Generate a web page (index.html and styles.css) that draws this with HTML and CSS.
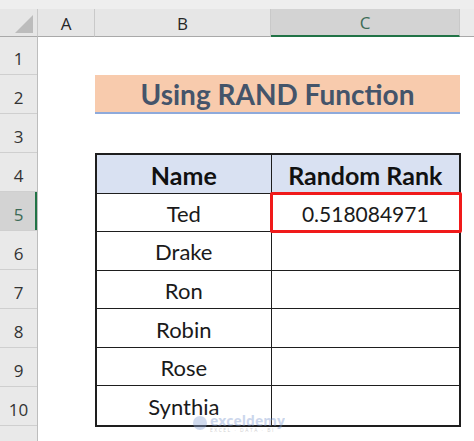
FILE: index.html
```html
<!DOCTYPE html>
<html>
<head>
<meta charset="utf-8">
<link rel="stylesheet" href="styles.css">
</head>
<body>
<div class="sheet">
  <div class="topstrip"></div>
  <div class="corner"><span class="tri"></span></div>
  <div class="ch ca">A</div>
  <div class="ch cb">B</div>
  <div class="ch cc sel">C</div>
  <div class="ch crest"></div>

  <div class="rowhdrs">
    <div class="rh r1">1</div>
    <div class="rh">2</div>
    <div class="rh">3</div>
    <div class="rh">4</div>
    <div class="rh sel">5</div>
    <div class="rh">6</div>
    <div class="rh">7</div>
    <div class="rh">8</div>
    <div class="rh">9</div>
    <div class="rh">10</div>
    <div class="rh last"></div>
  </div>

  <div class="title">Using RAND Function</div>

  <div class="tbl">
    <div class="th">Name</div>
    <div class="th">Random Rank</div>
    <div class="td">Ted</div>
    <div class="td active num">0.518084971</div>
    <div class="td">Drake</div>
    <div class="td"></div>
    <div class="td">Ron</div>
    <div class="td"></div>
    <div class="td">Robin</div>
    <div class="td"></div>
    <div class="td">Rose</div>
    <div class="td"></div>
    <div class="td">Synthia</div>
    <div class="td"></div>
  </div>

  <div class="watermark"><span class="wm-logo"></span><span class="wm-text">exceldemy<small>EXCEL · DATA · BI</small></span></div>
</div>
</body>
</html>
```
FILE: styles.css
```css
html, body {
  margin: 0;
  padding: 0;
  background: #ffffff;
}
.sheet {
  position: relative;
  width: 474px;
  height: 441px;
  overflow: hidden;
  display: grid;
  grid-template-columns: 38px 57px 176px 189px 14px;
  grid-template-rows: 9px 28px 38px 39px 39px 273px 15px;
  font-family: Lato, "Open Sans", sans-serif;
}
.topstrip {
  grid-column: 1 / -1;
  grid-row: 1;
  background: #eeeeee;
}
.corner, .ch {
  grid-row: 2;
  background: #e6e6e6;
  border-bottom: 1px solid #a9a9a9;
  border-right: 1px solid #c9c9c9;
  box-sizing: border-box;
}
.corner { grid-column: 1; position: relative; }
.ca { grid-column: 2; }
.cb { grid-column: 3; }
.cc { grid-column: 4; }
.crest { grid-column: 5; border-right: none; background: #ebebeb; }
.tri {
  position: absolute;
  right: 4px;
  bottom: 3px;
  width: 0;
  height: 0;
  border-left: 18px solid transparent;
  border-bottom: 18px solid #bcbcbc;
}
.ch {
  display: flex;
  align-items: center;
  justify-content: center;
  font-family: "Open Sans", sans-serif;
  font-size: 17px;
  color: #262626;
  padding-top: 1px;
}
.ch.sel {
  background: #d3d3d3;
  color: #3d6b57;
  border-bottom: 2px solid #217346;
}
.rowhdrs {
  grid-column: 1;
  grid-row: 3 / -1;
  background: #e9e9e9;
  border-right: 1px solid #bdbdbd;
  box-sizing: border-box;
}
.rh {
  height: 39px;
  box-sizing: border-box;
  border-bottom: 1px solid #cfcfcf;
  display: flex;
  align-items: center;
  justify-content: center;
  padding-top: 6px;
  font-family: "Open Sans", sans-serif;
  font-size: 17px;
  color: #333333;
}
.rh.r1 { height: 38px; }
.rh.sel {
  background: #d3d3d3;
  color: #3d6b57;
  box-shadow: inset -2px 0 0 #217346;
}
.rh.last { border-bottom: none; }
.title {
  grid-column: 3 / 5;
  grid-row: 4;
  box-sizing: border-box;
  background: #f8cbad;
  border-bottom: 2px solid #8eaadb;
  color: #44546a;
  font-family: Lato, sans-serif;
  font-weight: 700;
  font-size: 28px;
  display: flex;
  align-items: center;
  justify-content: center;
  padding-top: 1px;
}
.tbl {
  grid-column: 3 / 5;
  grid-row: 6;
  margin-right: -1px;
  height: 274px;
  display: grid;
  grid-template-columns: 176fr 189fr;
  grid-template-rows: repeat(7, 1fr);
  box-sizing: border-box;
  border: 2px solid #1e1e1e;
  align-self: start;
}
.th, .td {
  display: flex;
  align-items: center;
  justify-content: center;
  border-bottom: 1px solid #1e1e1e;
  box-sizing: border-box;
  font-family: Lato, sans-serif;
  font-size: 22px;
  color: #1a1a1a;
  padding-top: 2px;
}
.td.num { font-size: 21px; }
.th:nth-child(odd), .td:nth-child(odd) {
  border-right: 1px solid #1e1e1e;
}
.th {
  background: #d9e1f2;
  font-weight: 700;
  font-size: 25px;
  color: #111111;
}
.td:nth-last-child(-n+2) { border-bottom: none; }
.td.active { position: relative; }
.td.active::after {
  content: "";
  position: absolute;
  left: -2px;
  right: -3px;
  top: -2px;
  bottom: -2px;
  border: 3px solid #f01a1a;
  border-radius: 2px;
}
.watermark {
  position: absolute;
  left: 193px;
  top: 414px;
  display: flex;
  align-items: flex-start;
  gap: 3px;
  opacity: 0.4;
}
.wm-logo {
  width: 14px;
  height: 14px;
  border-radius: 50%;
  background: #8fa7d6;
  margin-top: 2px;
}
.wm-text {
  display: flex;
  flex-direction: column;
  font-family: "Open Sans", sans-serif;
  font-weight: 700;
  font-size: 14px;
  line-height: 13px;
  color: #7f9bd0;
}
.wm-text small {
  font-size: 5px;
  line-height: 6px;
  letter-spacing: 1.5px;
  font-weight: 400;
  color: #8a8a8a;
}
```
